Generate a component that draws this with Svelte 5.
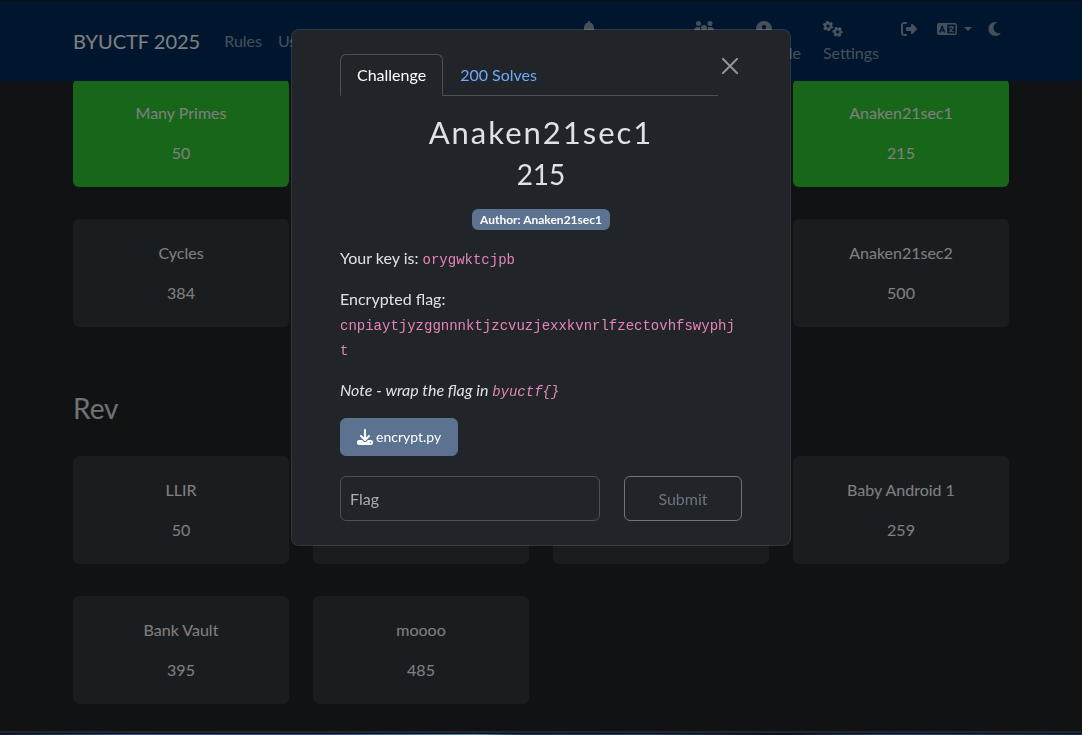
<script lang="ts">
  type Challenge = { name: string; value: number; solved?: boolean };

  let flag = $state("");
  let activeTab = $state("challenge");

  const pages = ["Rules", "Users", "Scoreboard"];

  const account = [
    {
      label: "Notifications",
      box: "0 0 448 512",
      width: 14,
      path: "M224 0c-17.7 0-32 14.3-32 32V51.2C119 66 64 130.6 64 208v18.8c0 47-17.3 92.4-48.5 127.6l-7.4 8.3c-8.4 9.4-10.4 22.9-5.3 34.4S19.4 416 32 416H416c12.6 0 24-7.4 29.2-18.9s3.1-25-5.3-34.4l-7.4-8.3C401.3 319.2 384 273.9 384 226.8V208c0-77.4-55-142-128-156.8V32c0-17.7-14.3-32-32-32z",
    },
    {
      label: "Users",
      box: "0 0 640 512",
      width: 20,
      path: "M144 0a80 80 0 1 1 0 160A80 80 0 1 1 144 0zM512 0a80 80 0 1 1 0 160A80 80 0 1 1 512 0zM0 298.7C0 239.8 47.8 192 106.7 192h42.7c15.9 0 31 3.5 44.6 9.7c-1.3 7.2-1.9 14.7-1.9 22.3c0 38.2 16.8 72.5 43.3 96H21.3C9.6 320 0 310.4 0 298.7zM405.3 320c26.6-23.5 43.3-57.8 43.3-96c0-7.6-.7-15-1.9-22.3c13.6-6.3 28.7-9.7 44.6-9.7h42.7C592.2 192 640 239.8 640 298.7c0 11.8-9.6 21.3-21.3 21.3H405.3zM224 224a96 96 0 1 1 192 0 96 96 0 1 1 -192 0zM128 485.3C128 411.7 187.7 352 261.3 352H378.7C452.3 352 512 411.7 512 485.3c0 14.7-11.9 26.7-26.7 26.7H154.7c-14.7 0-26.7-11.9-26.7-26.7z",
    },
    {
      label: "Profile",
      box: "0 0 512 512",
      width: 16,
      path: "M399 384.2C376.9 345.8 335.4 320 288 320H224c-47.4 0-88.9 25.8-111 64.2c35.2 39.2 86.2 63.8 143 63.8s107.8-24.7 143-63.8zM0 256a256 256 0 1 1 512 0A256 256 0 1 1 0 256zm256 16a72 72 0 1 0 0-144 72 72 0 1 0 0 144z",
    },
  ];

  const crypto: Challenge[] = [
    { name: "Many Primes", value: 50, solved: true },
    { name: "Real Smooth", value: 50, solved: true },
    { name: "Choose Your RSA", value: 50, solved: true },
    { name: "Anaken21sec1", value: 215, solved: true },
    { name: "Cycles", value: 384 },
    { name: "Key Exchange", value: 400 },
    { name: "Poly", value: 450 },
    { name: "Anaken21sec2", value: 500 },
  ];

  const rev: Challenge[] = [
    { name: "LLIR", value: 50 },
    { name: "Checker", value: 100 },
    { name: "Keygen", value: 150 },
    { name: "Baby Android 1", value: 259 },
    { name: "Bank Vault", value: 395 },
    { name: "moooo", value: 485 },
  ];
</script>

{#snippet board(list: Challenge[])}
  <div class="board">
    {#each list as item}
      <button class="card" class:solved={item.solved} type="button">
        <span>{item.name}</span>
        <span>{item.value}</span>
      </button>
    {/each}
  </div>
{/snippet}

<div class="page">
  <header>
    <nav class="container navbar">
      <a class="brand" href="#home">BYUCTF 2025</a>
      <div class="links">
        {#each pages as page}
          <a href="#{page.toLowerCase()}">{page}</a>
        {/each}
      </div>
      <div class="links account">
        {#each account as item}
          <a class="labelled" href="#{item.label.toLowerCase()}">
            <span class="icon">
              <svg viewBox={item.box} width={item.width} height="16"><path d={item.path} /></svg>
            </span>
            <span>{item.label}</span>
          </a>
        {/each}
        <a class="labelled" href="#settings">
          <span class="icon">
            <svg class="gears" viewBox="0 0 20 16" width="20" height="16">
              <circle cx="5" cy="5" r="2.8" stroke-width="2.4" />
              <circle cx="5" cy="5" r="4.4" stroke-width="1.6" stroke-dasharray="2.6 2.008" />
              <circle cx="14.6" cy="10.8" r="2.8" stroke-width="2.4" />
              <circle cx="14.6" cy="10.8" r="4.4" stroke-width="1.6" stroke-dasharray="2.6 2.008" stroke-dashoffset="1.3" />
            </svg>
          </span>
          <span>Settings</span>
        </a>
        <a class="logout" href="#logout" aria-label="Logout">
          <span class="icon">
            <svg viewBox="0 0 512 512" width="16" height="16">
              <path d="M377.9 105.9L500.7 228.7c7.2 7.2 11.3 17.1 11.3 27.3s-4.1 20.1-11.3 27.3L377.9 406.1c-6.4 6.4-15 9.9-24 9.9c-18.7 0-33.9-15.2-33.9-33.9l0-62.1-128 0c-17.7 0-32-14.3-32-32l0-64c0-17.7 14.3-32 32-32l128 0 0-62.1c0-18.7 15.2-33.9 33.9-33.9c9 0 17.6 3.6 24 9.9zM160 96L96 96c-17.7 0-32 14.3-32 32l0 256c0 17.7 14.3 32 32 32l64 0c17.7 0 32 14.3 32 32s-14.3 32-32 32l-64 0c-53 0-96-43-96-96L0 128C0 75 43 32 96 32l64 0c17.7 0 32 14.3 32 32s-14.3 32-32 32z" />
            </svg>
          </span>
        </a>
        <button class="language" type="button" aria-label="Language">
          <svg viewBox="0 0 20 16" width="20" height="16">
            <path fill-rule="evenodd" d="M2 2h16a2 2 0 0 1 2 2v8a2 2 0 0 1-2 2H2a2 2 0 0 1-2-2V4a2 2 0 0 1 2-2zM10.2 3.5v9h8.3v-9zM4.7 4.6L2 11.4h1.6l.4-1.2h2.4l.4 1.2h1.6L5.7 4.6zM5.2 6.7l.7 2.1H4.5z" />
            <path class="glyph" d="M11.6 6.2h5.4M14.3 4.8v1.4M16.2 6.4c-.7 2.1-2.2 3.8-4.2 4.8M12.8 7.8c.9 1.5 2.2 2.7 4 3.4" />
          </svg>
          <span class="caret"></span>
        </button>
        <button type="button" aria-label="Theme">
          <svg viewBox="0 0 384 512" width="13" height="16">
            <path d="M223.5 32C100 32 0 132.3 0 256S100 480 223.5 480c60.6 0 115.5-24.2 155.8-63.4c5-4.9 6.3-12.5 3.1-18.7s-10.1-9.7-17-8.5c-9.8 1.7-19.8 2.6-30.1 2.6c-96.9 0-175.5-78.8-175.5-176c0-65.8 36-123.1 89.3-153.3c6.1-3.5 9.2-10.5 7.7-17.3s-7.3-11.9-14.3-12.5c-6.3-.5-12.6-.8-19-.8z" />
          </svg>
        </button>
      </div>
    </nav>
  </header>

  <main class="container">
    {@render board(crypto)}
    <h3>Rev</h3>
    {@render board(rev)}
  </main>
  <footer></footer>
</div>

<div class="backdrop">
  <div class="modal" role="dialog" aria-labelledby="challenge-name">
    <div class="modal-top">
      <div class="tabs" role="tablist">
        <button
          type="button"
          role="tab"
          class:active={activeTab === "challenge"}
          aria-selected={activeTab === "challenge"}
          onclick={() => (activeTab = "challenge")}>Challenge</button
        >
        <button
          type="button"
          role="tab"
          class:active={activeTab === "solves"}
          aria-selected={activeTab === "solves"}
          onclick={() => (activeTab = "solves")}>200 Solves</button
        >
      </div>
      <button class="close" type="button" aria-label="Close">
        <svg viewBox="0 0 16 16" width="16" height="16"><path d="M.8.8l14.4 14.4M15.2.8L.8 15.2" /></svg>
      </button>
    </div>

    <h2 id="challenge-name">Anaken21sec1</h2>
    <h3 class="value">215</h3>
    <div class="tags"><span class="badge">Author: Anaken21sec1</span></div>

    <div class="description">
      <p>Your key is: <code>orygwktcjpb</code></p>
      <p>Encrypted flag: <code>cnpiaytjyzggnnnktjzcvuzjexxkvnrlfzectovhfswyphjt</code></p>
      <p><em>Note - wrap the flag in <code>byuctf{"{}"}</code></em></p>
    </div>

    <a class="file" href="#encrypt.py">
      <svg viewBox="0 0 512 512" width="16" height="16">
        <path d="M288 32c0-17.7-14.3-32-32-32s-32 14.3-32 32V274.7l-73.4-73.4c-12.5-12.5-32.8-12.5-45.3 0s-12.5 32.8 0 45.3l128 128c12.5 12.5 32.8 12.5 45.3 0l128-128c12.5-12.5 12.5-32.8 0-45.3s-32.8-12.5-45.3 0L288 274.7V32zM64 352c-35.3 0-64 28.7-64 64v32c0 35.3 28.7 64 64 64H448c35.3 0 64-28.7 64-64V416c0-35.3-28.7-64-64-64H346.5l-45.3 45.3c-25 25-65.5 25-90.5 0L165.5 352H64zm368 56a24 24 0 1 1 0 48 24 24 0 1 1 0-48z" />
      </svg>
      encrypt.py
    </a>

    <form onsubmit={(e) => e.preventDefault()}>
      <input type="text" placeholder="Flag" aria-label="Flag" bind:value={flag} />
      <button type="submit">Submit</button>
    </form>
  </div>
</div>

<style>
  :global(body) {
    margin: 0;
    background: #212529;
    color: #dee2e6;
    font-family: Lato, "Liberation Sans", sans-serif;
    font-size: 16px;
    line-height: 24px;
  }

  * {
    box-sizing: border-box;
  }

  button,
  input {
    font: inherit;
  }

  svg {
    fill: currentColor;
  }

  .page {
    display: flex;
    flex-direction: column;
    min-height: 100vh;
  }

  .container {
    width: 100%;
    max-width: 960px;
    margin: 0 auto;
    padding: 0 12px;
  }

  header {
    position: relative;
    z-index: 1;
    background: #002d5e;
    border-top: 1px solid #181c20;
  }

  .navbar {
    display: flex;
    align-items: center;
    padding-top: 8px;
    padding-bottom: 8px;
  }

  .brand {
    margin-right: 16px;
    color: white;
    font-size: 20px;
    text-decoration: none;
    white-space: nowrap;
  }

  .links {
    display: flex;
    align-items: center;
  }

  .links a,
  .links button {
    padding: 8px;
    background: none;
    border: none;
    color: rgba(255, 255, 255, 0.55);
    text-decoration: none;
  }

  .links.account {
    align-items: flex-start;
    margin-left: auto;
  }

  .links .labelled {
    display: flex;
    flex-direction: column;
    margin-right: 6px;
  }

  .links .logout {
    margin-right: 4px;
  }

  .icon,
  .links button {
    display: flex;
    align-items: center;
    height: 24px;
  }

  .links button {
    height: 40px;
  }

  .language {
    gap: 7px;
  }

  .gears {
    fill: none;
    stroke: currentColor;
  }

  .glyph {
    fill: none;
    stroke: currentColor;
    stroke-width: 1.2;
  }

  .caret {
    border-top: 4px solid;
    border-left: 4px solid transparent;
    border-right: 4px solid transparent;
  }

  main {
    flex: 1;
  }

  .board {
    display: grid;
    grid-template-columns: repeat(4, 1fr);
    gap: 32px 24px;
    margin-top: -2px;
  }

  .card {
    display: flex;
    flex-direction: column;
    align-items: center;
    justify-content: center;
    gap: 16px;
    height: 108px;
    background: #343b40;
    border: none;
    border-radius: 6px;
    color: white;
  }

  .card.solved {
    background: #2ecc32;
  }

  h2,
  h3 {
    margin: 0;
    font-weight: 400;
  }

  h2 {
    padding-top: 17px;
    font-size: 31px;
    line-height: 38px;
    letter-spacing: 2px;
  }

  h3 {
    font-size: 28px;
    line-height: 34px;
  }

  main h3 {
    margin: 64px 0 33px;
  }

  footer {
    position: relative;
    z-index: 3;
    height: 4px;
    background: linear-gradient(to right, #0a1c3c, #2a55a0 12%, #24509a 30%, #4a86b8 44%, #0a3a70 48%, #1c3c7c 60%, #06101c 72%, #1e4488 82%, #122a58);
    border-top: 2px solid #24252d;
    box-shadow: inset 0 1px #0b1220;
  }

  .backdrop {
    position: fixed;
    inset: 0;
    z-index: 2;
    padding-top: 29px;
    background: rgba(0, 0, 0, 0.5);
  }

  .modal {
    max-width: 500px;
    margin: 0 auto;
    padding: 24px 48px;
    background: #212529;
    background-clip: padding-box;
    border: 1px solid rgba(255, 255, 255, 0.15);
    border-radius: 8px;
  }

  .modal-top {
    display: flex;
    align-items: flex-start;
  }

  .tabs {
    display: flex;
    flex: 1;
    border-bottom: 1px solid #495057;
  }

  .tabs button {
    margin-bottom: -1px;
    padding: 8px 16px;
    background: none;
    border: 1px solid transparent;
    border-radius: 6px 6px 0 0;
    color: #6ea8fe;
  }

  .tabs button.active {
    background: #212529;
    border-color: #495057 #495057 #212529;
    color: white;
  }

  .close {
    display: flex;
    padding: 4px;
    background: none;
    border: none;
  }

  .close path {
    fill: none;
    stroke: #929496;
    stroke-width: 2;
    stroke-linecap: round;
  }

  h2,
  .value {
    text-align: center;
  }

  .value {
    margin-top: 6px;
  }

  .tags {
    display: flex;
    justify-content: center;
    margin: 18px 0 15px;
  }

  .badge {
    padding: 4px 8px;
    background: #5b7290;
    border-radius: 6px;
    color: white;
    font-size: 12px;
    font-weight: 700;
    line-height: 13px;
  }

  .description {
    line-height: 25px;
  }

  p {
    margin: 0 0 16px;
  }

  code {
    color: #e685b5;
    font-family: "Liberation Mono", monospace;
    font-size: 14px;
    line-height: 1;
    word-wrap: break-word;
  }

  .file {
    display: flex;
    align-items: center;
    gap: 3px;
    width: fit-content;
    padding: 6px 16px;
    background: #5b7290;
    border: 1px solid #5b7290;
    border-radius: 6px;
    color: white;
    font-size: 14px;
    text-decoration: none;
  }

  form {
    display: grid;
    grid-template-columns: repeat(12, 1fr);
    gap: 24px;
    margin-top: 20px;
  }

  form input {
    grid-column: span 8;
    min-width: 0;
    height: 45px;
    padding: 0 9px;
    background: #212529;
    border: 1px solid #495057;
    border-radius: 6px;
    color: #dee2e6;
  }

  form input::placeholder {
    color: #a7acb1;
    opacity: 1;
  }

  form button {
    grid-column: span 4;
    background: none;
    border: 1px solid #6c757d;
    border-radius: 6px;
    color: #6c757d;
  }
</style>
